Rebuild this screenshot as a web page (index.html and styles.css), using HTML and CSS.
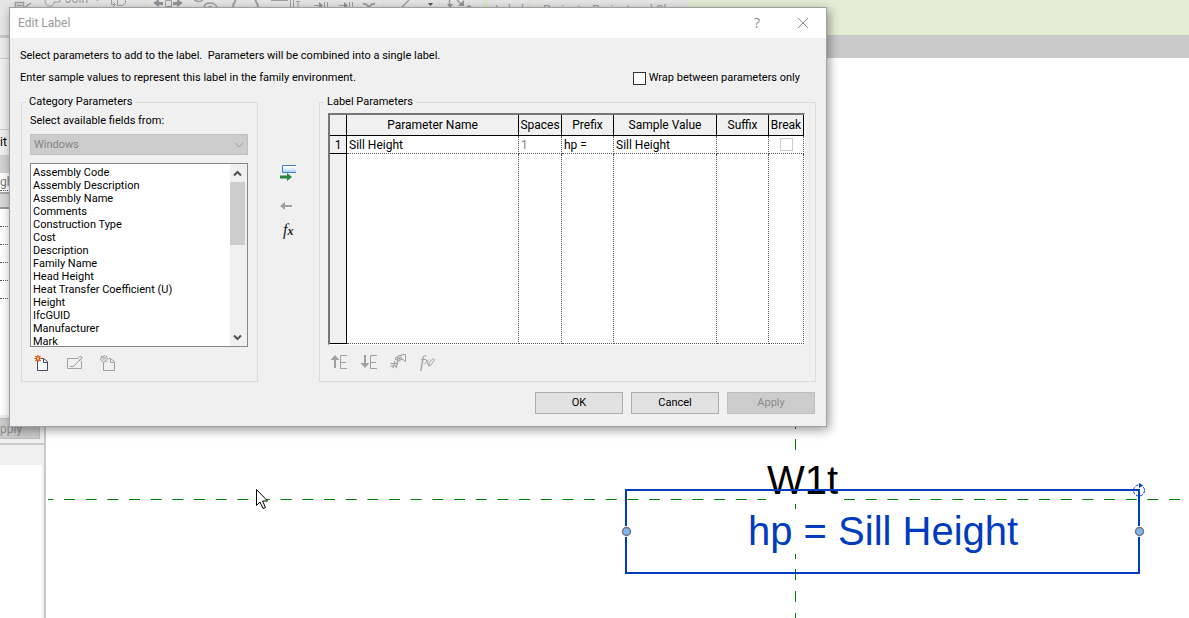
FILE: index.html
```html
<!DOCTYPE html>
<html lang="en">
<head>
<meta charset="utf-8">
<title>Edit Label</title>
<link rel="stylesheet" href="styles.css">
</head>
<body>
<div class="app">
  <header class="ribbon">
    <svg class="ribbon-tools" width="688" height="35" aria-hidden="true">
      <path d="M37.500 0V35M145.500 0V35M383.500 0V35M439.500 0V35" stroke="#dbe8cc" fill="none"/>
      <rect x="483" width="5" height="35" fill="#dbe8cc"/><path d="M529.500 0V35" stroke="#dbe8cc"/>
      <g fill="none" stroke="#a0a0a0">
        <path d="M15.500 7V2.500H23.500V9M17 5.500H22M24 8L31 3" stroke-width="1.500"/>
        <path d="M45 0C45 8 54 8 54 2H60V0"/>
        <path d="M111.500 0V4.500H115M113 2L115.500 4.500L113 7M117.500 0V5.500H122.500L125.500 3V0"/>
        <path d="M165.500 0.500H171.500V6.500H165.500Z"/>
        <path d="M194 0Q200 3 203 0M204 8Q204 3 210 3Q216 3 217 8M208 8Q210 5 213 8" stroke-width="1.500"/>
        <path d="M233 8Q233 3 236 0M258 8Q258 3 255 0" stroke-width="2"/>
        <path d="M271 0.500H288M290.500 0V8M293.500 0V8M296 1.500H300M298 1V8"/>
        <path d="M314 5.500H322M324.500 2V8M327.500 2V8M339 5.500H347M349.500 2V8M352.500 2V8"/>
        <path d="M363 4Q366 3 369 7Q372 3 375 4" stroke-width="2"/>
        <path d="M401 8L409 0M449.500 0V6M457 0L462 5" stroke-width="1.500"/>
      </g>
      <path d="M153 3L159 -1V2H163V5H159V7ZM183 3L177 -1V2H173V5H177V7ZM319 2L323 5.500L319 9ZM344 2L348 5.500L344 9ZM447 4H453L450 8ZM464 0V6H458ZM466 7L469 5L472 7Z" fill="#959595"/>
      <path d="M428 3H433L430.500 6Z" fill="#505050"/>
      <g class="ribbon-text"><text x="65" y="3">Join</text><text x="495" y="14">Label</text><text x="543" y="14">Project</text><text x="592" y="14">Project and Close</text><path d="M95 -1H100L97.500 1Z"/></g>
    </svg>
  </header>
  <div class="options"><div class="options-label"></div></div>
  <div class="workspace">
    <aside class="palette">
      <div class="type-preview"></div>
      <div class="edit-type">it</div>
      <div class="category"></div>
      <div class="prop-name">ght</div>
      <div class="category-small"></div>
      <div class="prop-row"></div><div class="prop-row"></div><div class="prop-row"></div>
      <div class="prop-row"></div><div class="prop-row"></div>
      <div class="prop-space"></div>
      <div class="palette-foot"><button class="palette-apply" disabled>pply</button></div>
      <div class="browser-head"></div>
      <div class="browser"></div>
    </aside>
    <main class="canvas">
      <svg class="drawing" aria-label="Label drawing">
        <g transform="translate(-46 -58)">
          <g stroke="#008000" fill="none">
            <path d="M48 499.500H766" stroke-dasharray="11 10.670" stroke-dashoffset="5.670"/>
            <path d="M844 499.500H1189" stroke-dasharray="11 10.670"/>
            <path d="M795.500 418V429M795.500 439V450M795.500 504V509M795.500 554V559M795.500 569V580M795.500 591V602M795.500 613V618"/>
          </g>
          <text class="tag" x="767" y="494">W1t</text>
          <rect x="626" y="490" width="513" height="83" fill="none" stroke="#003cc0" stroke-width="2"/>
          <text class="tag tag-selected" x="748" y="545">hp = Sill Height</text>
          <g fill="#80b4f5" stroke="#777" stroke-width="1.500">
            <path d="M626 526V537M1139 526V537" stroke="#fff" stroke-width="3"/>
            <circle cx="626.500" cy="531.500" r="4"/><circle cx="1139.500" cy="531.500" r="4"/>
          </g>
          <circle cx="1139" cy="490.500" r="5.500" fill="none" stroke="#003cc0" stroke-dasharray="3 1.300"/>
          <path d="M1139 483L1143 485.500L1139 488Z" fill="#003cc0"/>
          <path d="M256.500 489.500V505.500L260 502L263 508.500L265.500 507.500L262.500 501H267.500Z" fill="#fff" stroke="#000"/>
        </g>
      </svg>
    </main>
  </div>
</div>

<section class="dialog" role="dialog" aria-labelledby="dialog-title">
  <header class="titlebar">
    <h1 class="title" id="dialog-title">Edit Label</h1>
    <button class="title-button" aria-label="Help">?</button>
    <button class="title-button" aria-label="Close"><svg width="12" height="12"><path d="M1 1L11 11M11 1L1 11" stroke="#8a8a8a"/></svg></button>
  </header>
  <div class="dialog-body">
    <div class="intro">
      <p class="intro-line">Select parameters to add to the label.&nbsp; Parameters will be combined into a single label.</p>
      <div class="intro-row">
        <p class="intro-line">Enter sample values to represent this label in the family environment.</p>
        <label class="wrap"><input class="check" type="checkbox">Wrap between parameters only</label>
      </div>
    </div>
    <div class="columns">
      <fieldset class="group category-group">
        <legend class="legend">Category Parameters</legend>
        <label class="field-label" for="source">Select available fields from:</label>
        <div class="combo">
          <select class="combo-select" id="source" disabled><option>Windows</option></select>
          <svg class="combo-arrow" width="10" height="6"><path d="M1 1L5 5L9 1" fill="none" stroke="#a0a0a0"/></svg>
        </div>
        <div class="listbox">
          <select class="list" size="14" aria-label="Available fields">
            <option>Assembly Code</option><option>Assembly Description</option><option>Assembly Name</option><option>Comments</option><option>Construction Type</option><option>Cost</option><option>Description</option><option>Family Name</option><option>Head Height</option><option>Heat Transfer Coefficient (U)</option><option>Height</option><option>IfcGUID</option><option>Manufacturer</option><option>Mark</option>
          </select>
          <div class="scrollbar">
            <button class="scroll-button" aria-label="Scroll up"><svg width="9" height="7"><path d="M1 5.500L4.500 2L8 5.500" fill="none" stroke="#505050" stroke-width="2"/></svg></button>
            <div class="scroll-thumb"></div>
            <button class="scroll-button scroll-down" aria-label="Scroll down"><svg width="9" height="7"><path d="M1 1.500L4.500 5L8 1.500" fill="none" stroke="#505050" stroke-width="2"/></svg></button>
          </div>
        </div>
        <div class="tools field-tools">
          <button class="tool" aria-label="New parameter"><svg width="16" height="16"><path d="M3.500 5.500V15.500H13.500V6.500L9.500 3.500H6.500" fill="#fbfcff" stroke="#454b5c"/><path d="M9.500 3.500V7.500H13.500" fill="none" stroke="#454b5c"/><path d="M4 0V7M0.500 3.500H7.500M1.500 1L6.500 6M6.500 1L1.500 6" stroke="#d94a10" stroke-width="1.200"/><rect x="3" y="2.500" width="2" height="2" fill="#ffe36a"/></svg></button>
          <button class="tool" aria-label="Edit parameter" disabled><svg width="16" height="16" fill="none" stroke="#a0a0a0"><path d="M11 3.500H0.500V13.500H14.500V6M3 11.500H6.500L12 5.500L14 3.500M11 3L13 1.500L15 2L14.500 4L12 6"/></svg></button>
          <button class="tool" aria-label="Delete parameter" disabled><svg width="16" height="16" fill="none" stroke="#a0a0a0"><path d="M3.500 7V15.500H14.500V6.500L10.500 3.500H8.500M10.500 3.500V7.500H14.500"/><path d="M1 1L7 7M7 1L1 7M4 0.500L7.500 4L4 7.500L0.500 4Z" stroke-dasharray="1 1" stroke-width="1.500"/></svg></button>
        </div>
      </fieldset>
      <div class="transfer">
        <button class="tool" aria-label="Add parameter to label"><svg width="16" height="16"><defs><linearGradient id="row" x2="0" y2="1"><stop offset="0.200" stop-color="#fff"/><stop offset="1" stop-color="#a5cdf2"/></linearGradient></defs><path d="M17 0.500H2.500V7.500H17" fill="url(#row)" stroke="#3c80c8"/><path d="M0 10.500H7V8L12 12L7 16V13.500H0Z" fill="#23863b"/></svg></button>
        <button class="tool" aria-label="Remove parameter from label" disabled><svg width="17" height="10"><path d="M1 6H5V9.500M5 6H13" stroke="#fff" fill="none"/><path d="M0 5L5 1V4H12V6H5V9Z" fill="#a0a0a0"/></svg></button>
        <button class="tool fx" aria-label="Add calculated value"><i>f</i><i class="fx-x">x</i></button>
      </div>
      <fieldset class="group label-group">
        <legend class="legend">Label Parameters</legend>
        <div class="grid-frame">
          <table class="grid">
            <colgroup><col class="c-num"><col><col class="c-spaces"><col class="c-short"><col class="c-sample"><col class="c-short"><col class="c-break"></colgroup>
            <thead><tr><th></th><th>Parameter Name</th><th>Spaces</th><th>Prefix</th><th>Sample Value</th><th>Suffix</th><th>Break</th></tr></thead>
            <tbody>
              <tr class="entry"><th scope="row">1</th><td>Sill Height</td><td class="muted">1</td><td>hp =</td><td>Sill Height</td><td></td><td class="break-cell"><input class="check check-off" type="checkbox" aria-label="Break" disabled></td></tr>
              <tr class="blank"><th></th><td></td><td></td><td></td><td></td><td></td><td></td></tr>
            </tbody>
          </table>
        </div>
        <div class="tools label-tools">
          <button class="tool" aria-label="Move up" disabled><svg width="17" height="16"><path d="M5 1L9.500 6H6V14H4V6H0.500Z" fill="#a0a0a0"/><path d="M17 1.500H10.500V14.500H17M10.500 8.500H16" fill="none" stroke="#a0a0a0"/></svg></button>
          <button class="tool" aria-label="Move down" disabled><svg width="17" height="16"><path d="M5 14L9.500 9H6V1H4V9H0.500Z" fill="#a0a0a0"/><path d="M17 1.500H10.500V14.500H17M10.500 8.500H16" fill="none" stroke="#a0a0a0"/></svg></button>
          <button class="tool" aria-label="Edit units format" disabled><svg width="17" height="16" fill="none" stroke="#a0a0a0"><path d="M3 14L5 7M6 14L8 7M0.500 9.500H8M0 12H7" stroke-width="1.200"/><path d="M5 4L9 1.500H12V0.500H15.500V7.500L12 5L9 7L5 5"/><path d="M5 4.500H12M7 2.500L11 6M7 6L11 2.500" stroke-dasharray="1 1" stroke-width="2"/></svg></button>
          <button class="tool fx fx-off" aria-label="Edit calculated value" disabled><i>f</i><svg width="11" height="10" fill="none" stroke="#a0a0a0"><path d="M0 2.500H2L4 7.500H5.500M5 2.500L0 7.500M5 6L9 1.500L10.500 3L6.500 8.500L4.500 9Z"/></svg></button>
        </div>
      </fieldset>
    </div>
    <footer class="actions">
      <button class="button">OK</button>
      <button class="button">Cancel</button>
      <button class="button" disabled>Apply</button>
    </footer>
  </div>
</section>
</body>
</html>
```
FILE: styles.css
```css
* { box-sizing: border-box; }
body, h1, p { margin: 0; }
body {
  font: 11px/16px Roboto, "Liberation Sans", sans-serif;
  color: #000;
  background: #fff;
  overflow: hidden;
}
button, select, input { font: inherit; margin: 0; }
button { padding: 0; }

/* Application behind the dialog */
.app { display: flex; flex-direction: column; height: 100vh; }
.ribbon { flex: none; height: 35px; background: #e3edd5; }
.ribbon-tools { display: block; background: #e6e6e6; }
.ribbon-text { fill: #999; font-size: 12px; }
.options { flex: none; height: 23px; padding-top: 3px; background: #c9c9c9; }
.options-label { width: 46px; height: 20px; background: #ececec; }
.workspace { flex: 1; display: flex; min-height: 0; }
.palette {
  flex: none;
  width: 46px;
  display: flex;
  flex-direction: column;
  background: #fff;
  border-right: 2px solid #c9c9c9;
  overflow: hidden;
}
.type-preview { height: 72px; background: #f0f0f0; border-top: 1px solid #c9c9c9; border-bottom: 1px solid #c9c9c9; }
.edit-type { height: 25px; font-size: 12px; line-height: 24px; background: #f0f0f0; }
.category { height: 18px; background: #d2d2d2; }
.prop-name { height: 18px; font-size: 12px; line-height: 18px; color: #777; border-bottom: 1px dotted #555; }
.category-small { height: 17px; margin-top: 1px; background: #d8d8d8; border-top: 2px solid #aaa; border-bottom: 2px solid #999; }
.prop-row { height: 18px; border-bottom: 1px dotted #555; }
.prop-space { height: 116px; }
.palette-foot { height: 28px; padding-top: 3px; background: #f0f0f0; }
.palette-apply {
  width: 40px; height: 21px;
  font-size: 12px;
  text-align: left;
  color: #8c8c8c;
  background: #ccc;
  border: 1px solid #bfbfbf;
  border-left: 0;
}
.browser-head { height: 22px; background: #f0f0f0; border-top: 2px solid #c9c9c9; }
.browser { flex: 1; border-right: 2px solid #f0f0f0; }
.canvas { flex: 1; min-width: 0; overflow: hidden; }
.drawing { display: block; width: 100%; height: 100%; }
.tag { font: 40px "Liberation Sans", Arial, sans-serif; }
.tag-selected { fill: #003cc0; }

/* Dialog window */
.dialog {
  position: absolute;
  left: 9px; top: 7px;
  width: min(818px, calc(100vw - 18px));
  background: #f0f0f0;
  border: 1px solid #a0a0a0;
  box-shadow: 2px 3px 10px rgba(0, 0, 0, 0.4);
}
.titlebar { display: flex; align-items: center; height: 30px; padding-left: 8px; background: #fff; }
.title { flex: 1; font: 12px/16px Roboto, sans-serif; color: #999; }
.title-button {
  width: 46px; height: 28px;
  display: flex; align-items: center; justify-content: center;
  font: 14px/16px "Open Sans", sans-serif;
  color: #8a8a8a;
  background: none;
  border: 0;
}
.dialog-body { padding: 10px 10px 12px 11px; }
.intro { display: flex; flex-direction: column; gap: 6px; margin-left: -1px; }
.intro-row { display: flex; justify-content: space-between; }
.intro-line { white-space: nowrap; }
.wrap { display: flex; align-items: center; gap: 3px; padding-right: 16px; }
.check { appearance: none; width: 13px; height: 13px; background: #fff; border: 1px solid #333; }
.check-off { border-color: #ccc; }
.columns { display: flex; align-items: stretch; margin-top: 8px; }
.group { min-width: 0; margin: 0; padding: 3px 9px 10px 8px; border: 1px solid #dcdcdc; }
.category-group { width: 237px; }
.label-group { flex: 1; padding-right: 10px; }
.legend { margin-left: -4px; padding: 0 3px; }
.field-label { display: block; }
.combo { display: grid; margin-top: 5px; }
.combo-select {
  grid-area: 1 / 1;
  appearance: none;
  height: 21px;
  padding: 0 3px;
  color: #838383;
  opacity: 1;
  background: #ccc;
  border: 1px solid #bfbfbf;
  border-radius: 0;
}
.combo-arrow { grid-area: 1 / 1; place-self: center end; margin-right: 4px; }
.listbox { display: flex; margin-top: 8px; background: #fff; border: 1px solid #828790; }
.list {
  flex: 1;
  min-width: 0;
  height: 182px;
  padding: 2px 0 0;
  line-height: 13px;
  color: #000;
  background: #fff;
  border: 0;
  border-radius: 0;
  outline: 0;
  overflow: hidden;
  scrollbar-width: none;
}
.list option { height: 13px; min-height: 13px; padding: 0 2px; line-height: 13px; }
.scrollbar { flex: none; width: 17px; display: flex; flex-direction: column; padding: 1px 2px 0 0; background: #f0f0f0; }
.scroll-button { display: grid; place-items: center; height: 17px; background: #f0f0f0; border: 0; }
.scroll-thumb { height: 63px; background: #cdcdcd; }
.scroll-down { margin-top: auto; }
.tools { display: flex; align-items: center; height: 16px; }
.tool { display: flex; background: none; border: 0; }
.field-tools { gap: 17px; margin-top: 8px; padding-left: 4px; }
.label-tools { gap: 13px; margin-top: 9px; padding-left: 2px; }
.transfer { flex: none; width: 61px; display: flex; flex-direction: column; align-items: flex-start; padding: 71px 0 0 22px; }
.transfer .tool:nth-child(2) { margin-top: 20px; }
.fx { align-items: baseline; font: 16px/16px "Liberation Serif", serif; color: #222; }
.transfer .fx { margin: 11px 0 0 3px; }
.fx-x { font-size: 12px; font-weight: bold; }
.fx-off { color: #a0a0a0; }

/* Parameter grid */
.grid-frame { background: #fff; border: 1px solid #fff; border-top: 2px solid #777; border-left: 2px solid #777; }
.grid { width: 100%; table-layout: fixed; border-collapse: separate; border-spacing: 0; font-size: 12px; }
.c-num { width: 17px; }
.c-spaces { width: 43px; }
.c-short { width: 52px; }
.c-sample { width: 103px; }
.c-break { width: 35px; }
.grid th, .grid td { padding: 0 2px; white-space: nowrap; font-weight: normal; }
.grid th { background: #f0f0f0; border-right: 1px solid #000; border-bottom: 1px solid #000; }
.grid thead th { height: 21px; padding: 0; text-align: center; }
.grid td { text-align: left; border-right: 1px dotted #555; border-bottom: 1px dotted #555; }
.entry th, .entry td { height: 18px; line-height: 16px; }
.blank th, .blank td { height: 190px; }
.grid .muted { color: #8c7f8c; }
.grid .break-cell { text-align: center; }
.break-cell .check { display: block; margin: 0 auto; }

.actions { display: flex; justify-content: flex-end; gap: 8px; margin-top: 10px; padding-right: 1px; }
.button { width: 88px; height: 22px; color: #000; background: #e1e1e1; border: 1px solid #adadad; }
.button:disabled { color: #8c8c8c; background: #ccc; border-color: #bfbfbf; }
```
